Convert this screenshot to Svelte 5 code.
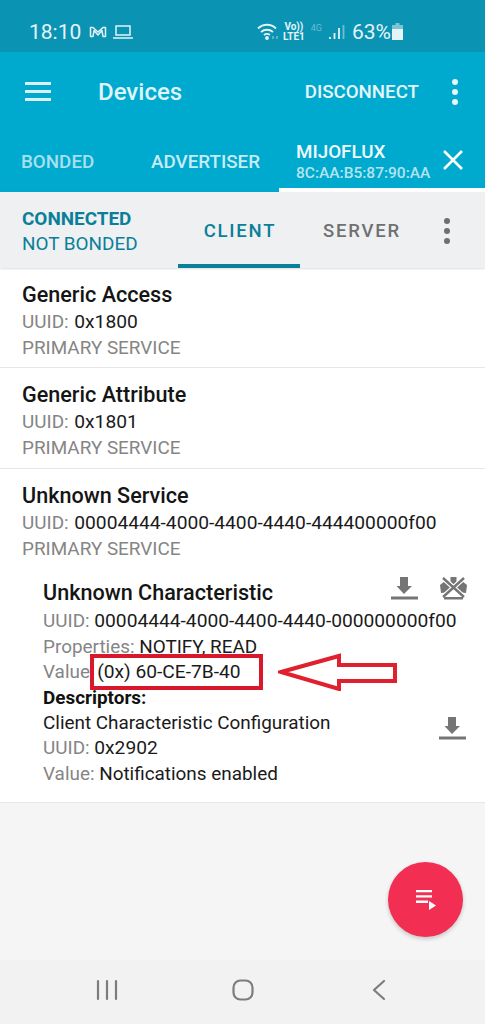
<script>
  // nRF Connect device screen with a hand-drawn annotation over the value row.
  const services = [
    { name: 'Generic Access', uuid: '0x1800' },
    { name: 'Generic Attribute', uuid: '0x1801' },
    { name: 'Unknown Service', uuid: '00004444-4000-4400-4440-444400000f00' }
  ];
</script>

{#snippet readIcon()}
  <svg class="icon" width="27" height="23" viewBox="0 0 27 23" fill="#757575"><path d="M9 0h8v9h4l-8 8-7.500-8H9z"/><path d="M0 19.500h27v3H0z"/></svg>
{/snippet}

<div class="phone">
  <div class="status">
    <span class="time">18:10</span>
    <svg class="gm" width="18" height="12" viewBox="0 0 18 12" fill="none" stroke="currentColor" stroke-width="1.500" stroke-linejoin="round"><path d="M1.500 1.500h2.500L9 6l5-4.500h2.500v9h-2.500l-1-6L9 9 5 4.500l-1 6H1.500z"/></svg>
    <svg class="laptop" width="20" height="14" viewBox="0 0 20 14" fill="none" stroke="currentColor" stroke-width="1.500"><path d="M3 1h14v9H3z"/><path d="M0 13h20"/></svg>
    <span class="spacer"></span>
    <svg class="wifi" width="24" height="17" viewBox="0 0 24 17" fill="none" stroke="currentColor" stroke-width="1.800"><path d="M1 5.500C6 .5 14 .5 19 5.500"/><path d="M4 9c3.500-3 8.500-3 12 0"/><path d="M7 12c2-1.500 4-1.500 6 0"/><circle cx="10" cy="15" r="1" fill="currentColor"/><path d="M16 16v-3M20 16v-3" stroke-width="1" opacity=".7"/></svg>
    <span class="volte"><span>Vo))</span><span>LTE1</span></span>
    <span class="fourg">4G</span>
    <svg class="signal" width="16" height="16" viewBox="0 0 16 16" fill="none" stroke="currentColor" stroke-width="1.800"><path d="M1 15v-2M5.500 15V9M10 15V4"/><path d="M14.500 15V1" opacity=".45"/></svg>
    <span class="pct">63%</span>
    <svg class="battery" width="11" height="17" viewBox="0 0 11 17"><path d="M3.500 0h4v2h-4zM0 2h11v4H0z" fill="#7cc3d6"/><path d="M0 6h11v11H0z" fill="#e4f3f7"/></svg>
  </div>

  <header class="toolbar">
    <div class="title-row">
      <span class="burger"><i></i><i></i><i></i></span>
      <h1>Devices</h1>
      <span class="disconnect">DISCONNECT</span>
      <span class="dots light"><i></i><i></i><i></i></span>
    </div>
    <nav class="tabs">
      <span class="tab bonded">BONDED</span>
      <span class="tab advertiser">ADVERTISER</span>
      <div class="tab device">
        <div class="device-text">
          <strong>MIJOFLUX</strong>
          <small>8C:AA:B5:87:90:AA</small>
        </div>
        <svg class="close" width="20" height="20" viewBox="0 0 20 20" stroke="#fff" stroke-width="2.600"><path d="M1 1l18 18M19 1L1 19"/></svg>
      </div>
    </nav>
  </header>

  <div class="subbar">
    <div class="conn">
      <strong>CONNECTED</strong>
      <span>NOT BONDED</span>
    </div>
    <span class="subtab active">CLIENT</span>
    <span class="subtab">SERVER</span>
    <span class="dots grey"><i></i><i></i><i></i></span>
  </div>

  <main class="list">
    {#each services as s, i}
      <section class="service" class:first={i === 0} class:last={i === 2}>
        <h2>{s.name}</h2>
        <p><span class="k">UUID:</span> <span class="num">{s.uuid}</span></p>
        <p class="k">PRIMARY SERVICE</p>
      </section>
    {/each}

    <section class="char">
      <div class="char-head">
        <h2>Unknown Characteristic</h2>
        {@render readIcon()}
        <svg class="icon" width="27" height="23" viewBox="0 0 27 23" fill="#757575">
          <path d="M10.500 0h6v5l-3 4-3-4z"/>
          <path d="M0 8l5-4 6 7-1 4-9 1z"/>
          <path d="M27 8l-5-4-6 7 1 4 9 1z"/>
          <path d="M3 1l21 19M24 1L3 20" stroke="#fff" stroke-width="5" fill="none"/>
          <path d="M3 1l21 19M24 1L3 20" stroke="#757575" stroke-width="2.400" fill="none"/>
          <path d="M4 20h19v2.500H4z"/>
        </svg>
      </div>
      <p><span class="k">UUID:</span> <span class="num">00004444-4000-4400-4440-000000000f00</span></p>
      <p><span class="k">Properties:</span> NOTIFY, READ</p>
      <p><span class="k">Value:</span> <span class="num value">(0x) 60-CE-7B-40</span></p>
      <p class="desc">Descriptors:</p>
      <div class="desc-row">
        <p>Client Characteristic Configuration</p>
        {@render readIcon()}
      </div>
      <p><span class="k">UUID:</span> <span class="num">0x2902</span></p>
      <p><span class="k">Value:</span> Notifications enabled</p>
    </section>
  </main>

  <div class="filler"></div>

  <footer class="nav">
    <svg width="22" height="22" viewBox="0 0 22 22" stroke="#7d7d7d" stroke-width="2.200" stroke-linecap="round"><path d="M2 2v18M11 2v18M20 2v18"/></svg>
    <svg width="22" height="22" viewBox="0 0 22 22" fill="none" stroke="#7d7d7d" stroke-width="2.200"><rect x="1.500" y="1.500" width="19" height="19" rx="7"/></svg>
    <svg class="back" width="14" height="22" viewBox="0 0 14 22" fill="none" stroke="#7d7d7d" stroke-width="2.200" stroke-linecap="round" stroke-linejoin="round"><path d="M12 2L2 11l10 9"/></svg>
  </footer>

  <button class="fab" aria-label="Queue">
    <svg width="20" height="20" viewBox="0 0 20 20" fill="#fff"><path d="M0 0h16v2.300H0zM0 5.300h16v2.300H0zM0 10.600h12v2.300H0z"/><path d="M13 11l7 4.500-7 4.500z"/></svg>
  </button>

  <div class="redbox"></div>
  <svg class="arrow" width="120" height="38" viewBox="0 0 120 38" fill="none" stroke="#e0202f" stroke-width="4"><path d="M3 19L61 3v9h56v16H61v8z"/></svg>
</div>

<style>
  :global(body) { margin: 0; }
  .phone {
    position: relative;
    width: 485px;
    height: 1024px;
    display: flex;
    flex-direction: column;
    overflow: hidden;
    background: #f5f5f5;
    font-family: Roboto, sans-serif;
    color: #111;
  }
  p, h1, h2 { margin: 0; }

  .status {
    height: 52px;
    flex: none;
    box-sizing: border-box;
    padding: 11px 82px 0 29px;
    display: flex;
    align-items: center;
    background: #0a93b3;
    color: #e4f3f7;
  }
  .time { font-size: 21px; margin-right: 8px; }
  .laptop { margin-left: 6px; }
  .spacer { flex: 1; }
  .volte { display: flex; flex-direction: column; font-size: 10px; line-height: 10px; font-weight: 700; margin-left: 2px; text-align: center; }
  .fourg { font-size: 9px; color: #6dbcd1; margin: 0 7px 8px 6px; }
  .signal { margin-right: 7px; }
  .pct { font-size: 21px; }
  .battery { margin-left: 1px; }

  .toolbar { height: 140px; flex: none; background: #00a9ce; color: #fff; display: flex; flex-direction: column; }
  .title-row { height: 79px; display: flex; align-items: center; padding: 0 0 0 25px; }
  .burger { display: flex; flex-direction: column; gap: 5px; width: 26px; }
  .burger i { height: 3px; background: #d9f1f7; }
  h1 { font-size: 24px; font-weight: 500; margin-left: 47px; color: #dff4f9; flex: 1; }
  .disconnect { font-size: 18.700px; font-weight: 500; color: #e6f6fa; }
  .dots { display: flex; flex-direction: column; gap: 4px; }
  .dots i { width: 6px; height: 6px; border-radius: 50%; }
  .dots.light { margin: 0 27px 0 33px; }
  .dots.light i { background: #e6f6fa; }
  .dots.grey i { background: #6f6f6f; }

  .tabs { flex: 1; display: flex; }
  .tab { font-size: 18.800px; font-weight: 500; color: #a8e0ee; }
  .bonded { margin: 20px 0 0 21px; width: 130px; }
  .advertiser { margin: 20px 0 0 0; color: #c8ecf5; width: 128px; }
  .device {
    flex: 1;
    display: flex;
    align-items: center;
    box-sizing: border-box;
    padding: 6px 22px 0 17px;
    border-bottom: 4px solid #fff;
    justify-content: space-between;
  }
  .device-text { display: flex; flex-direction: column; }
  .device strong { font-size: 18.800px; line-height: 21px; font-weight: 500; color: #f0fafc; }
  .device small { font-size: 15.500px; line-height: 20px; color: #b4e4f0; }
  .close { margin-bottom: 6px; }

  .subbar {
    height: 76px;
    flex: none;
    display: flex;
    background: #eff0f2;
    box-shadow: 0 1px 2px rgba(0,0,0,.14);
    position: relative;
    z-index: 1;
  }
  .conn { width: 178px; box-sizing: border-box; padding: 14px 0 0 22px; display: flex; flex-direction: column; color: #0a7f9a; font-size: 18.900px; line-height: 25px; }
  .conn strong { font-weight: 700; }
  .subtab { width: 122px; text-align: center; text-indent: 2px; line-height: 79px; font-size: 18.500px; font-weight: 500; letter-spacing: 1.800px; color: #6f7072; }
  .subtab.active { color: #0a7f9a; border-bottom: 4px solid #0a7f9a; box-sizing: border-box; height: 76px; }
  .dots.grey { margin: 26px 0 0 22px; }

  .list { background: #fff; flex: none; border-bottom: 1px solid #e6e6e6; }
  .service { box-sizing: border-box; padding: 13px 22px 0; height: 101px; border-bottom: 1px solid #e6e6e6; }
  .service.first { height: 100px; }
  .service.last { height: 96px; border-bottom: none; }
  .service h2 { margin-bottom: 1px; }
  .service .k { margin-right: 1px; }
  h2 { font-size: 21.600px; line-height: 27px; font-weight: 500; color: #151515; }
  .list p { font-size: 18.900px; line-height: 25.500px; color: #1a1a1a; white-space: nowrap; }
  .list p.k, .k { color: #858585; }
  .num { font-size: 19.200px; }
  .num.value { margin-left: -2px; }

  .char { padding: 12px 0 16px 43px; }
  .char-head { display: flex; align-items: center; height: 31px; padding-right: 18px; gap: 22px; }
  .char-head h2 { flex: 1; }
  .char-head .icon { margin-bottom: 8px; }
  .list p.desc { font-weight: 700; color: #111; }
  .desc-row { display: flex; justify-content: space-between; align-items: center; padding-right: 19px; height: 25px; }
  .desc-row .icon { margin-top: 12px; }

  .filler { flex: 1; }

  .nav {
    height: 64px;
    flex: none;
    background: #f2f2f2;
    display: flex;
    align-items: center;
    box-sizing: border-box;
    padding: 0 0 4px 96px;
    gap: 114px;
  }
  .back { margin-left: 4px; }
  .fab {
    position: absolute;
    left: 388px;
    top: 862px;
    width: 75px;
    height: 75px;
    padding: 0;
    border: 0;
    border-radius: 50%;
    background: #f22e52;
    box-shadow: 0 2px 4px rgba(0,0,0,.2);
    display: flex;
    align-items: center;
    justify-content: center;
  }
  .redbox {
    position: absolute;
    left: 90px;
    top: 654px;
    width: 165px;
    height: 28px;
    border: 4px solid #d9182b;
  }
  .arrow { position: absolute; left: 278px; top: 653px; }
</style>
